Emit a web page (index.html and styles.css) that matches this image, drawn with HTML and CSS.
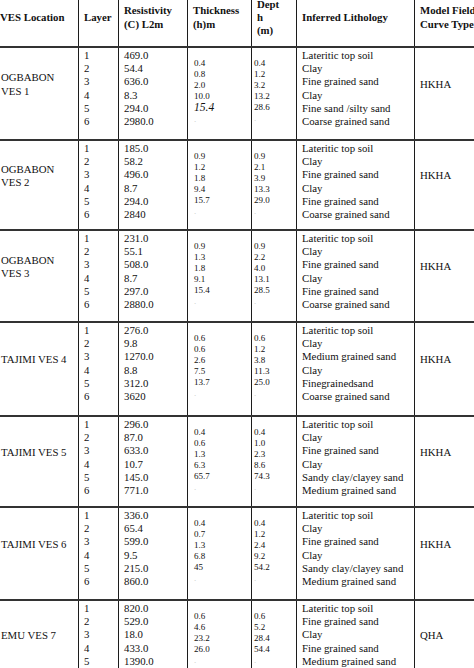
FILE: index.html
```html
<!DOCTYPE html>
<html>
<head>
<meta charset="utf-8">
<link rel="stylesheet" href="styles.css">
</head>
<body>
<div class="frame">
<table class="ves">
  <colgroup>
    <col class="c-loc"><col class="c-layer"><col class="c-res"><col class="c-thk"><col class="c-dep"><col class="c-lit"><col class="c-mod">
  </colgroup>
  <thead>
    <tr class="head">
      <th>VES Location</th>
      <th>Layer</th>
      <th>Resistivity<br>(C) L2m</th>
      <th>Thickness<br>(h)m</th>
      <th>Dept<br>h<br>(m)</th>
      <th>Inferred Lithology</th>
      <th>Model Field<br>Curve Type</th>
    </tr>
  </thead>
  <tbody>
    <tr class="r1">
      <td class="loc">OGBABON<br>VES 1</td>
      <td class="list">1<br>2<br>3<br>4<br>5<br>6</td>
      <td class="list res">469.0<br>54.4<br>636.0<br>8.3<br>294.0<br>2980.0</td>
      <td class="sm">0.4<br>0.8<br>2.0<br>10.0<br><i class="big">15.4</i><br><span class="dot">.</span></td>
      <td class="sm dep">0.4<br>1.2<br>3.2<br>13.2<br>28.6<br><span class="dot">.</span></td>
      <td class="list">Lateritic top soil<br>Clay<br>Fine grained sand<br>Clay<br>Fine sand /silty sand<br>Coarse grained sand</td>
      <td class="mod">HKHA</td>
    </tr>
    <tr class="r2">
      <td class="loc">OGBABON<br>VES 2</td>
      <td class="list">1<br>2<br>3<br>4<br>5<br>6</td>
      <td class="list res">185.0<br>58.2<br>496.0<br>8.7<br>294.0<br>2840</td>
      <td class="sm">0.9<br>1.2<br>1.8<br>9.4<br>15.7<br><span class="dot">.</span></td>
      <td class="sm dep">0.9<br>2.1<br>3.9<br>13.3<br>29.0<br><span class="dot">.</span></td>
      <td class="list">Lateritic top soil<br>Clay<br>Fine grained sand<br>Clay<br>Fine grained sand<br>Coarse grained sand</td>
      <td class="mod">HKHA</td>
    </tr>
    <tr class="r3">
      <td class="loc">OGBABON<br>VES 3</td>
      <td class="list">1<br>2<br>3<br>4<br>5<br>6</td>
      <td class="list res">231.0<br>55.1<br>508.0<br>8.7<br>297.0<br>2880.0</td>
      <td class="sm">0.9<br>1.3<br>1.8<br>9.1<br>15.4<br><span class="dot">.</span></td>
      <td class="sm dep">0.9<br>2.2<br>4.0<br>13.1<br>28.5<br><span class="dot">.</span></td>
      <td class="list">Lateritic top soil<br>Clay<br>Fine grained sand<br>Clay<br>Fine grained sand<br>Coarse grained sand</td>
      <td class="mod">HKHA</td>
    </tr>
    <tr class="r4">
      <td class="loc">TAJIMI VES 4</td>
      <td class="list">1<br>2<br>3<br>4<br>5<br>6</td>
      <td class="list res">276.0<br>9.8<br>1270.0<br>8.8<br>312.0<br>3620</td>
      <td class="sm">0.6<br>0.6<br>2.6<br>7.5<br>13.7<br><span class="dot">.</span></td>
      <td class="sm dep">0.6<br>1.2<br>3.8<br>11.3<br>25.0<br><span class="dot">.</span></td>
      <td class="list">Lateritic top soil<br>Clay<br>Medium grained sand<br>Clay<br>Finegrainedsand<br>Coarse grained sand</td>
      <td class="mod">HKHA</td>
    </tr>
    <tr class="r5">
      <td class="loc">TAJIMI VES 5</td>
      <td class="list">1<br>2<br>3<br>4<br>5<br>6</td>
      <td class="list res">296.0<br>87.0<br>633.0<br>10.7<br>145.0<br>771.0</td>
      <td class="sm">0.4<br>0.6<br>1.3<br>6.3<br>65.7<br><span class="dot">.</span></td>
      <td class="sm dep">0.4<br>1.0<br>2.3<br>8.6<br>74.3<br><span class="dot">.</span></td>
      <td class="list">Lateritic top soil<br>Clay<br>Fine grained sand<br>Clay<br>Sandy clay/clayey sand<br>Medium grained sand</td>
      <td class="mod">HKHA</td>
    </tr>
    <tr class="r6">
      <td class="loc">TAJIMI VES 6</td>
      <td class="list">1<br>2<br>3<br>4<br>5<br>6</td>
      <td class="list res">336.0<br>65.4<br>599.0<br>9.5<br>215.0<br>860.0</td>
      <td class="sm">0.4<br>0.7<br>1.3<br>6.8<br>45<br><span class="dot">.</span></td>
      <td class="sm dep">0.4<br>1.2<br>2.4<br>9.2<br>54.2<br><span class="dot">.</span></td>
      <td class="list">Lateritic top soil<br>Clay<br>Fine grained sand<br>Clay<br>Sandy clay/clayey sand<br>Medium grained sand</td>
      <td class="mod">HKHA</td>
    </tr>
    <tr class="r7">
      <td class="loc">EMU VES 7</td>
      <td class="list">1<br>2<br>3<br>4<br>5</td>
      <td class="list res">820.0<br>529.0<br>18.0<br>433.0<br>1390.0</td>
      <td class="sm">0.6<br>4.6<br>23.2<br>26.0<br><span class="dot">.</span></td>
      <td class="sm dep">0.6<br>5.2<br>28.4<br>54.4<br><span class="dot">.</span></td>
      <td class="list">Lateritic top soil<br>Fine grained sand<br>Clay<br>Fine grained sand<br>Medium grained sand</td>
      <td class="mod">QHA</td>
    </tr>
  </tbody>
</table>
</div>
</body>
</html>
```

FILE: styles.css
```css
html, body {
  margin: 0;
  padding: 0;
  background: #ffffff;
  overflow: hidden;
}

.frame {
  width: 474px;
  height: 668px;
  overflow: hidden;
}

.ves {
  margin-top: -11px;
  margin-left: -6px;
  border-collapse: collapse;
  table-layout: fixed;
  width: 489px;
  font-family: "Liberation Serif", "Times New Roman", serif;
  font-size: 10.8px;
  line-height: 13.2px;
  color: #111111;
}

.c-loc { width: 84px; }
.c-layer { width: 40px; }
.c-res { width: 69px; }
.c-thk { width: 64px; }
.c-dep { width: 45px; }
.c-lit { width: 118px; }
.c-mod { width: 69px; }

.ves th,
.ves td {
  border-left: 1px solid #1c1c1c;
  border-right: 1px solid #1c1c1c;
  padding: 1px 0 0 5px;
  text-align: left;
  white-space: nowrap;
}

.ves tr {
  border-bottom: 2px solid #333333;
}

.ves .head th {
  height: 57px;
  font-weight: bold;
  vertical-align: middle;
  padding-top: 0;
}

.ves td.list {
  vertical-align: top;
}

.ves td.loc,
.ves td.mod {
  vertical-align: middle;
  padding-bottom: 19px;
}

.ves td.loc {
  padding-left: 6px;
}

.ves td.sm {
  vertical-align: top;
  font-size: 9px;
  line-height: 10.9px;
  padding-top: 10px;
  padding-left: 6px;
}

.ves td.dep {
  padding-left: 2px;
}

.big {
  font-size: 11.5px;
  line-height: 10.9px;
}

.dot {
  color: #c8c8c8;
}

.r1 { height: 93px; }
.r2 { height: 90px; }
.r3 { height: 92px; }
.r4 { height: 94px; }
.r5 { height: 91px; }
.r6 { height: 93px; }
.r7 { height: 90px; }
```
